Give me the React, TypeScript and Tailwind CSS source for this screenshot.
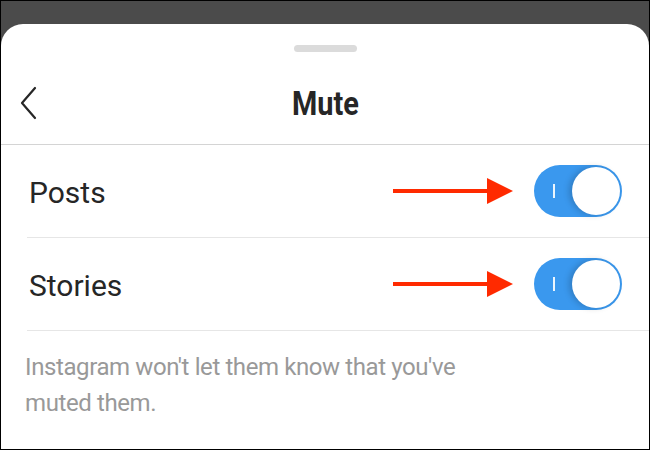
import React from "react";

function Arrow() {
  return (
    <svg width="120" height="26" viewBox="0 0 120 26" className="shrink-0">
      <rect x="0" y="11" width="96" height="4" fill="#ff2a00" />
      <polygon points="94,0 120,13 94,26" fill="#ff2a00" />
    </svg>
  );
}

function Toggle() {
  return (
    <div className="relative w-[88px] h-[52px] rounded-full bg-[#3a98ee] shrink-0">
      <div className="absolute left-[19px] top-[19px] w-[2px] h-[14px] bg-white/90" />
      <div className="absolute right-[2px] top-[2px] w-[48px] h-[48px] rounded-full bg-white shadow-[-3px_0_6px_rgba(0,0,0,0.18)]" />
    </div>
  );
}

function Row({ label }: { label: string }) {
  return (
    <div className="flex items-center h-[93px] pr-[27px] ml-[26px] border-b border-[#e6e6e6]">
      <span className="text-[30px] text-[#262626] flex-1 ml-[2px] pt-[2px]">{label}</span>
      <Arrow />
      <div className="w-[21px]" />
      <Toggle />
    </div>
  );
}

export default function App() {
  return (
    <div
      className="w-[650px] h-[450px] border border-black bg-[#4b4b4b] overflow-hidden flex flex-col pt-[23px]"
      style={{ fontFamily: "Roboto, 'Noto Sans', sans-serif" }}
    >
      <div className="flex-1 bg-white rounded-t-[22px] flex flex-col">
        <div className="flex justify-center pt-[21px]">
          <div className="w-[63px] h-[7px] rounded-full bg-[#dbdbdb]" />
        </div>
        <div className="relative h-[93px] flex items-center justify-center border-b border-[#d4d4d4]">
          <svg width="20" height="34" viewBox="0 0 20 34" className="absolute left-[18px] top-[34px]">
            <polyline points="16,2 3,17 16,32" fill="none" stroke="#262626" strokeWidth="2.2" strokeLinecap="round" strokeLinejoin="round" />
          </svg>
          <span className="text-[34px] font-bold text-[#262626] scale-x-[0.85] mt-[11px]">Mute</span>
        </div>
        <div className="flex flex-col">
          <Row label="Posts" />
          <Row label="Stories" />
        </div>
        <p className="text-[24px] leading-[36px] text-[#999999] pl-[24px] pt-[18px] w-[480px] tracking-[-0.4px]">
          Instagram won't let them know that you've muted them.
        </p>
      </div>
    </div>
  );
}
